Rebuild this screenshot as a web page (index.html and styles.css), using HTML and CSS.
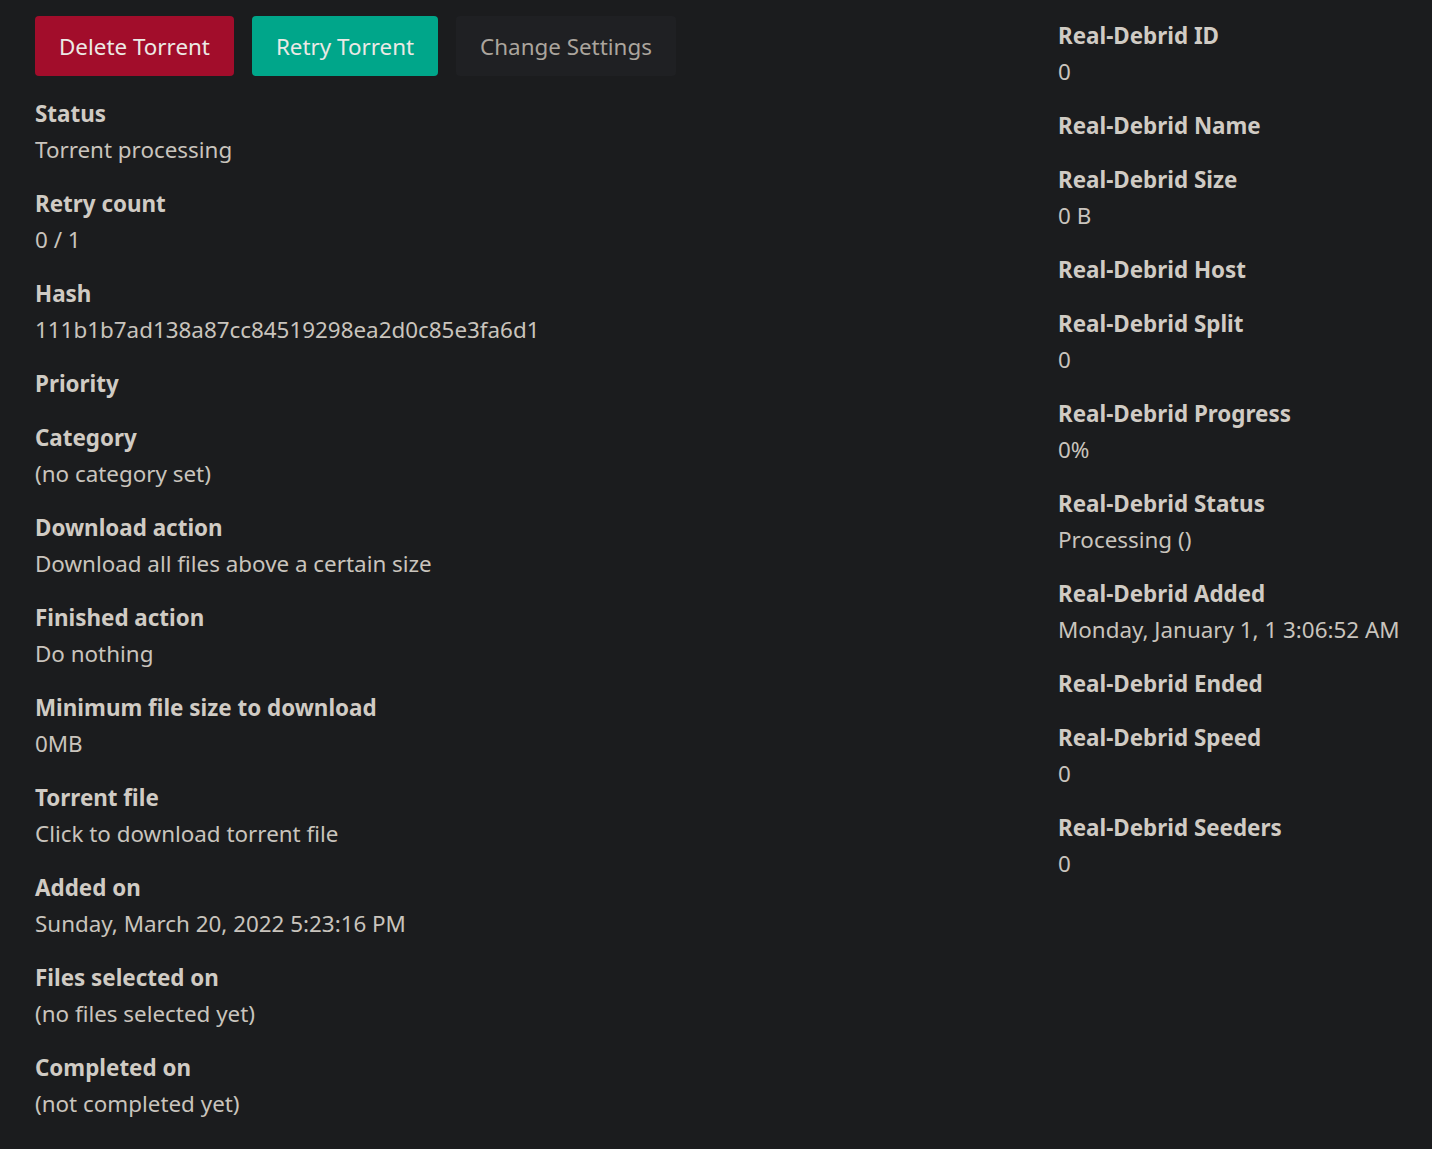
FILE: index.html
```html
<!DOCTYPE html>
<html lang="en">
<head>
    <meta charset="UTF-8">
    <title>Torrent</title>
    <link rel="stylesheet" href="styles.css">
</head>
<body>
    <div class="page">
        <div class="col-main">
            <div class="actions">
                <button class="button button-red">Delete Torrent</button>
                <button class="button button-teal">Retry Torrent</button>
                <button class="button button-dark">Change Settings</button>
            </div>

            <div class="field"><div class="label">Status</div><div class="value">Torrent processing</div></div>
            <div class="field"><div class="label">Retry count</div><div class="value">0 / 1</div></div>
            <div class="field"><div class="label">Hash</div><div class="value">111b1b7ad138a87cc84519298ea2d0c85e3fa6d1</div></div>
            <div class="field"><div class="label">Priority</div></div>
            <div class="field"><div class="label">Category</div><div class="value">(no category set)</div></div>
            <div class="field"><div class="label">Download action</div><div class="value">Download all files above a certain size</div></div>
            <div class="field"><div class="label">Finished action</div><div class="value">Do nothing</div></div>
            <div class="field"><div class="label">Minimum file size to download</div><div class="value">0MB</div></div>
            <div class="field"><div class="label">Torrent file</div><div class="value">Click to download torrent file</div></div>
            <div class="field"><div class="label">Added on</div><div class="value">Sunday, March 20, 2022 5:23:16 PM</div></div>
            <div class="field"><div class="label">Files selected on</div><div class="value">(no files selected yet)</div></div>
            <div class="field"><div class="label">Completed on</div><div class="value">(not completed yet)</div></div>
        </div>

        <div class="col-side">
            <div class="field"><div class="label">Real-Debrid ID</div><div class="value">0</div></div>
            <div class="field"><div class="label">Real-Debrid Name</div></div>
            <div class="field"><div class="label">Real-Debrid Size</div><div class="value">0 B</div></div>
            <div class="field"><div class="label">Real-Debrid Host</div></div>
            <div class="field"><div class="label">Real-Debrid Split</div><div class="value">0</div></div>
            <div class="field"><div class="label">Real-Debrid Progress</div><div class="value">0%</div></div>
            <div class="field"><div class="label">Real-Debrid Status</div><div class="value">Processing ()</div></div>
            <div class="field"><div class="label">Real-Debrid Added</div><div class="value">Monday, January 1, 1 3:06:52 AM</div></div>
            <div class="field"><div class="label">Real-Debrid Ended</div></div>
            <div class="field"><div class="label">Real-Debrid Speed</div><div class="value">0</div></div>
            <div class="field"><div class="label">Real-Debrid Seeders</div><div class="value">0</div></div>
        </div>
    </div>
</body>
</html>
```

FILE: styles.css
```css
body {
    margin: 0;
    background-color: #1b1c1e;
    color: #c9c4bd;
    font-family: "Noto Sans", "Open Sans", sans-serif;
    font-size: 22.4px;
    line-height: 36px;
}
.page {
    display: grid;
    grid-template-columns: 1023px 1fr;
    padding: 16px 0 0 35px;
}
.actions {
    display: flex;
    gap: 18px;
    margin-bottom: 20px;
}
.button {
    height: 60px;
    padding: 0 24px;
    border: none;
    border-radius: 4px;
    font-family: inherit;
    font-size: 22.4px;
    cursor: pointer;
}
.button-red {
    background-color: #a20d2b;
    color: #ece9e5;
}
.button-teal {
    background-color: #00a68a;
    color: #ece9e5;
}
.button-dark {
    background-color: #1f2023;
    color: #aba59d;
}
.col-side {
    padding-top: 2px;
}
.field {
    margin-bottom: 18px;
}
.label {
    font-weight: bold;
    color: #d0cbc4;
}
```
